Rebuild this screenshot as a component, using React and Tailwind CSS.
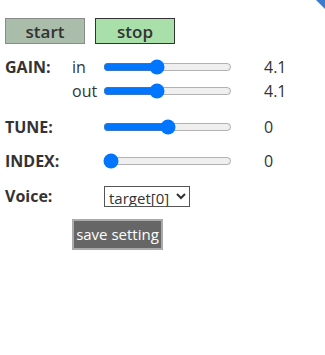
import { useState } from "react";

const font = { fontFamily: '"Open Sans", "Liberation Sans", sans-serif' };

function SliderRow({ label, sub, value, min, max, step, onChange, rowClass }) {
    return (
        <div className={`flex items-center ${rowClass}`}>
            <div className="w-[67px] font-bold text-[16px] text-[#333]">{label}</div>
            <div className="w-[29px] text-[16px] text-[#333]">{sub}</div>
            <input
                type="range"
                min={min}
                max={max}
                step={step}
                value={value}
                onChange={(e) => onChange(parseFloat(e.target.value))}
                className="w-[129px] mx-[2px] accent-[#0075ff]"
            />
            <div className="ml-[30px] text-[16px] text-[#333]">{value}</div>
        </div>
    );
}

export default function App() {
    const [gainIn, setGainIn] = useState(4.1);
    const [gainOut, setGainOut] = useState(4.1);
    const [tune, setTune] = useState(0);
    const [index, setIndex] = useState(0);
    const [voice, setVoice] = useState("0");

    return (
        <div className="relative w-[325px] h-[355px] bg-white overflow-hidden" style={font}>
            {/* corner marker */}
            <svg className="absolute top-0 right-0" width="9" height="9" viewBox="0 0 9 9">
                <polygon points="0,0 9,0 9,9" fill="#3d7bd1" />
            </svg>

            <div className="pl-[5px] pt-[18px]">
                {/* buttons */}
                <div className="flex gap-[10px]">
                    <button className="w-[80px] h-[26px] bg-[#aabdaa] border border-[#8a8a8a] text-[17px] font-semibold text-[#333] leading-none">
                        start
                    </button>
                    <button className="w-[80px] h-[26px] bg-[#a9dfa9] border border-[#333] text-[17px] font-semibold text-[#333] leading-none">
                        stop
                    </button>
                </div>

                <SliderRow label="GAIN:" sub="in" value={gainIn} min={0} max={10} step={0.1} onChange={setGainIn} rowClass="mt-[11px] h-[24px]" />
                <SliderRow label="" sub="out" value={gainOut} min={0} max={10} step={0.1} onChange={setGainOut} rowClass="h-[24px]" />
                <SliderRow label="TUNE:" sub="" value={tune} min={-12} max={12} step={1} onChange={setTune} rowClass="mt-[12px] h-[24px]" />
                <SliderRow label="INDEX:" sub="" value={index} min={0} max={15} step={1} onChange={setIndex} rowClass="mt-[10px] h-[24px]" />

                <div className="flex items-center mt-[11px] h-[24px]">
                    <div className="w-[99px] font-bold text-[16px] text-[#333]">Voice:</div>
                    <select
                        value={voice}
                        onChange={(e) => setVoice(e.target.value)}
                        className="h-[21px] w-[86px] border border-[#555] text-[15px] text-[#333] bg-white"
                        style={font}
                    >
                        {[0, 1, 2, 3].map((i) => (
                            <option key={i} value={String(i)}>target[{i}]</option>
                        ))}
                    </select>
                </div>

                <div className="mt-[11px] pl-[67px]">
                    <button className="w-[91px] h-[31px] bg-[#666] border-2 border-[#aaa] text-white text-[15px]">
                        save setting
                    </button>
                </div>
            </div>
        </div>
    );
}
